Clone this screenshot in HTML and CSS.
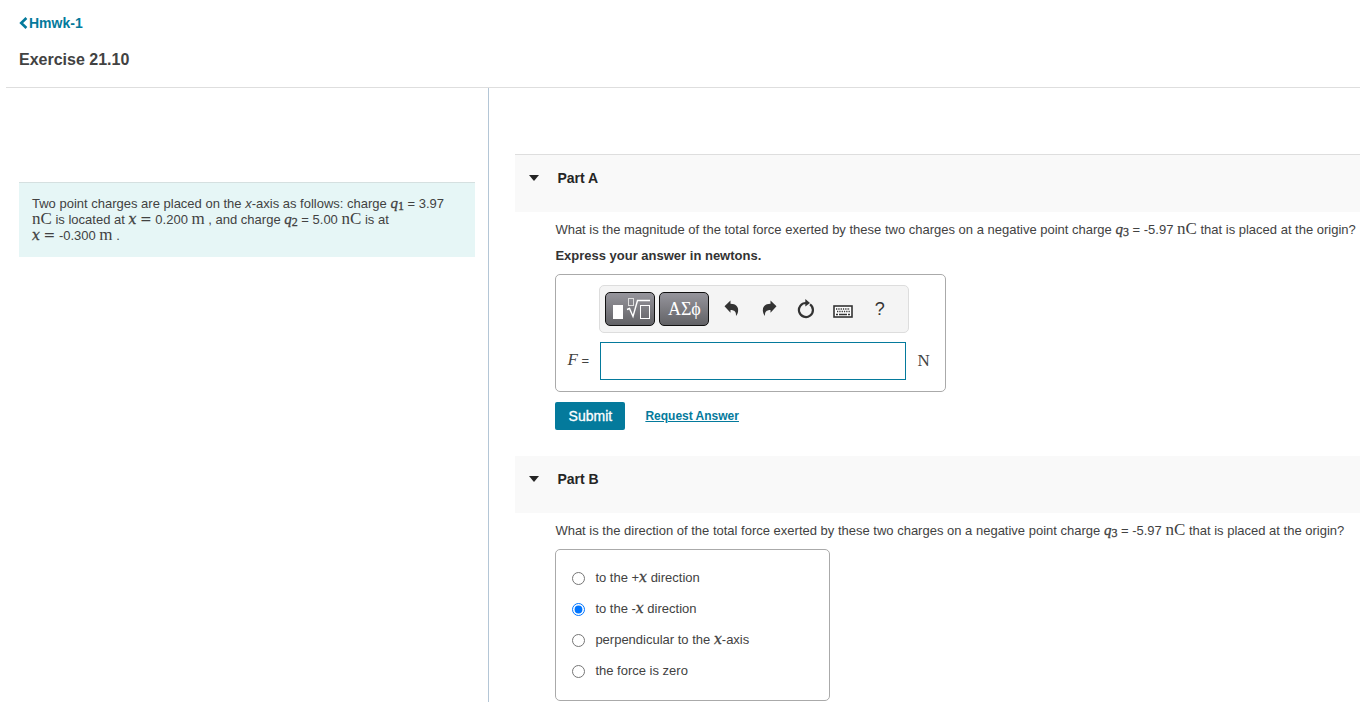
FILE: index.html
```html
<!DOCTYPE html>
<html lang="en">
<head>
    <meta charset="UTF-8">
    <meta name="viewport" content="width=device-width, initial-scale=1.0">
    <title>Exercise 21.10</title>
    <link rel="stylesheet" href="styles.css">
</head>
<body>
    <header>
        <a class="back" href="#">
            <svg width="9" height="12" viewBox="0 0 9 12"><path d="M7.4 1 2.2 6l5.2 5" fill="none" stroke="currentColor" stroke-width="2.6"/></svg>Hmwk-1
        </a>
        <h1>Exercise 21.10</h1>
    </header>
    <main>
        <aside>
            <p class="problem">Two point charges are placed on the <i>x</i>-axis as follows: charge <span class="sym">q<sub>1</sub></span> = 3.97 <span class="unit">nC</span> is located at <span class="var">x</span> <span class="equals">=</span> 0.200 <span class="unit">m</span> , and charge <span class="sym">q<sub>2</sub></span> = 5.00 <span class="unit">nC</span> is at <br><span class="var">x</span> <span class="equals">=</span> -0.300 <span class="unit">m</span> .</p>
        </aside>
        <div class="parts">
            <section class="part">
                <h2><button type="button" class="toggle"><span class="arrow"></span>Part A</button></h2>
                <div class="part-body">
                    <p>What is the magnitude of the total force exerted by these two charges on a negative point charge <span class="sym">q<sub>3</sub></span> = -5.97 <span class="unit">nC</span> that is placed at the origin?</p>
                    <p class="instructions">Express your answer in newtons.</p>
                    <form>
                        <div class="answer-box">
                            <div class="toolbar">
                                <button type="button" class="palette" aria-label="Templates">
                                    <svg width="40" height="26" viewBox="0 0 40 26" fill="none" stroke="#fff">
                                        <rect x="3" y="9" width="10" height="14" fill="#fff" stroke="none"/>
                                        <rect x="18.5" y="2.5" width="5" height="7" stroke="#ddd"/>
                                        <path d="M17 13.5l2.500-1 3.500 8L27.500 4.500H40" stroke-width="1.400"/>
                                        <rect x="30.500" y="9.500" width="9" height="13"/>
                                    </svg>
                                </button>
                                <button type="button" class="palette">ΑΣϕ</button>
                                <div class="tools">
                                    <button type="button" aria-label="Undo">
                                        <svg width="16" height="18" viewBox="0 0 16 18"><path d="M.5 6.300 6.500.5v3.300c5.500 0 8.500 3.500 7.500 8-.3 1.600-.9 3-2 4.200.3-4-1.300-5.800-5.500-5.900v2.600z" fill="#333"/></svg>
                                    </button>
                                    <button type="button" aria-label="Redo">
                                        <svg width="16" height="18" viewBox="0 0 16 18"><path d="M15.500 6.300 9.500.5v3.300c-5.500 0-8.500 3.500-7.500 8 .3 1.600.9 3 2 4.200-.3-4 1.300-5.800 5.500-5.900v2.600z" fill="#333"/></svg>
                                    </button>
                                    <button type="button" aria-label="Reset">
                                        <svg width="18" height="20" viewBox="0 0 18 20"><path d="M13 5.300A7 7 0 1 1 9 4" fill="none" stroke="#333" stroke-width="2.200"/><path d="M8.300 0v7.600L13 4z" fill="#333"/></svg>
                                    </button>
                                    <button type="button" aria-label="Keyboard">
                                        <svg class="keyboard" width="20" height="13" viewBox="0 0 20 13"><rect x="1" y="1" width="18" height="11" fill="#fff" stroke="#333" stroke-width="1.600"/><path d="M3 4h14M4 6.500h13" stroke="#333" stroke-width="1.500" stroke-dasharray="1.300 1"/><path d="M3 9.500h2M6 9.500h8M15 9.500h2" stroke="#333" stroke-width="1.600"/></svg>
                                    </button>
                                    <button type="button" class="help">?</button>
                                </div>
                            </div>
                            <label for="force"><span class="force">F</span> =</label>
                            <input type="text" id="force" name="force">
                            <span class="unit">N</span>
                        </div>
                        <div class="actions">
                            <button type="submit">Submit</button>
                            <a href="#">Request Answer</a>
                        </div>
                    </form>
                </div>
            </section>
            <section class="part">
                <h2><button type="button" class="toggle"><span class="arrow"></span>Part B</button></h2>
                <div class="part-body">
                    <p>What is the direction of the total force exerted by these two charges on a negative point charge <span class="sym">q<sub>3</sub></span> = -5.97 <span class="unit">nC</span> that is placed at the origin?</p>
                    <form class="choices">
                        <label><input type="radio" name="direction"><span>to the +<span class="var">x</span> direction</span></label>
                        <label><input type="radio" name="direction" checked><span>to the -<span class="var">x</span> direction</span></label>
                        <label><input type="radio" name="direction"><span>perpendicular to the <span class="var">x</span>-axis</span></label>
                        <label><input type="radio" name="direction"><span>the force is zero</span></label>
                    </form>
                </div>
            </section>
        </div>
    </main>
</body>
</html>
```

FILE: styles.css
```css
* {
    box-sizing: border-box;
}

body {
    margin: 0;
    min-height: 100vh;
    display: flex;
    flex-direction: column;
    font-family: "Liberation Sans", Arial, sans-serif;
    font-size: 13px;
    line-height: 16px;
    color: #424242;
    background: #fff;
}

h1, h2, p {
    margin: 0;
}

button {
    font-family: inherit;
    padding: 0;
    border: none;
    background: none;
    cursor: pointer;
}

a {
    color: #047a9c;
}

header {
    margin-left: 6px;
    padding: 15px 13px 17px;
    border-bottom: 1px solid #dedede;
}

.back {
    display: inline-flex;
    align-items: center;
    gap: 1px;
    font-size: 14px;
    font-weight: bold;
    text-decoration: none;
}

h1 {
    margin-top: 17px;
    font-size: 16px;
    line-height: 20px;
}

main {
    flex: 1;
    display: grid;
    grid-template-columns: 35.7% 1fr;
    margin-left: 6px;
}

aside {
    padding: 94px 13px 0;
    border-right: 1px solid #b4c6d6;
}

.problem {
    padding: 13px;
    background: #e6f6f6;
    border-top: 1px solid #d5e0e0;
}

/* math */
.unit, .sym, .force {
    font-family: "Liberation Serif", "Times New Roman", serif;
    font-size: 17px;
    line-height: 0;
}

.sym, .force {
    font-style: italic;
}

.sym {
    font-size: 15px;
    -webkit-text-stroke: 0.3px #424242;
}

.sym sub {
    font-size: 12px;
    font-style: normal;
    line-height: 0;
    vertical-align: -2px;
}

.equals {
    font-family: "DejaVu Sans", sans-serif;
    font-size: 14px;
    line-height: 0;
}

.var {
    font-family: "DejaVu Serif", serif;
    font-size: 14px;
    font-style: italic;
    line-height: 0;
    -webkit-text-stroke: 0.3px #424242;
}

.parts {
    padding: 66px 0 0 26px;
}

h2 {
    padding: 11px 14px 22px;
    line-height: 24px;
    background: #f9f9f9;
}

.part:first-child h2 {
    border-top: 1px solid #dedede;
}

.toggle {
    display: flex;
    align-items: center;
    gap: 18px;
    font-size: 14px;
    font-weight: bold;
    line-height: 24px;
    color: #252525;
}

.arrow {
    border: 5px solid transparent;
    border-top: 6px solid #252525;
    border-bottom: none;
}

.part-body {
    padding: 10px 0 0 40px;
}

.instructions {
    margin-top: 10px;
    font-weight: bold;
    color: #333;
}

.answer-box {
    display: inline-grid;
    grid-template-columns: 32px 307px auto;
    row-gap: 9px;
    align-items: center;
    margin-top: 10px;
    padding: 10px 15px 11px 11px;
    border: 1px solid #aaa;
    border-radius: 5px;
    vertical-align: top;
}

.toolbar {
    grid-column: 2 / span 2;
    display: flex;
    align-items: center;
    gap: 4px;
    width: 310px;
    height: 48px;
    margin-right: 21px;
    padding: 0 5px;
    background: #f4f4f4;
    border: 1px solid #ddd;
    border-radius: 5px;
}

.palette {
    display: flex;
    align-items: center;
    justify-content: center;
    width: 50px;
    height: 34px;
    color: #fff;
    font-family: "Liberation Serif", serif;
    font-size: 18px;
    background: linear-gradient(#96959c, #626266);
    border: 1px solid #111;
    border-radius: 5px;
}

.tools {
    display: flex;
}

.tools button {
    display: flex;
    align-items: center;
    justify-content: center;
    width: 37px;
    height: 34px;
    color: #333;
}

.keyboard {
    margin-top: 4px;
}

.tools .help {
    font-size: 18px;
}

.answer-box label {
    grid-column: 1;
}

.answer-box input {
    width: 306px;
    height: 38px;
    margin-left: 1px;
    padding: 0 8px;
    font-size: 16px;
    border: 1px solid #047a9c;
}

.answer-box .unit {
    padding-left: 11px;
}

.actions {
    display: flex;
    align-items: center;
    gap: 20px;
    margin: 10px 0 26px;
}

.actions button {
    width: 70px;
    height: 28px;
    color: #fff;
    font-size: 14px;
    background: #047a9c;
    border-radius: 2px;
    -webkit-text-stroke: 0.3px #fff;
}

.actions a {
    font-size: 12px;
    font-weight: bold;
}

.choices {
    display: inline-flex;
    flex-direction: column;
    gap: 15px;
    width: 275px;
    margin-top: 10px;
    padding: 20px 16px 21px;
    border: 1px solid #aaa;
    border-radius: 5px;
    vertical-align: top;
}

.choices label {
    display: flex;
    align-items: center;
    gap: 10px;
}

.choices input {
    width: 13px;
    height: 13px;
    margin: 0;
}
```
